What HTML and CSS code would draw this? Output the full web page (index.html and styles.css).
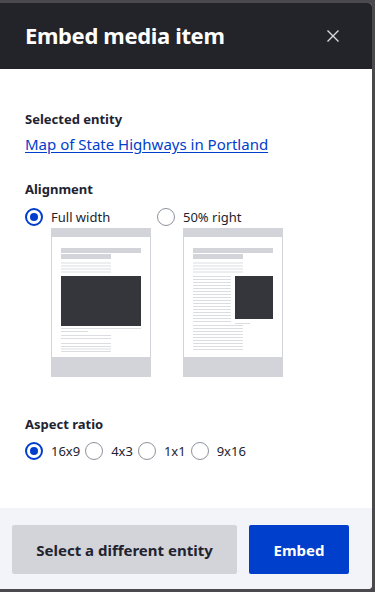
FILE: index.html
```html
<!DOCTYPE html>
<html lang="en">
<head>
<meta charset="utf-8">
<title>Embed media item</title>
<link rel="stylesheet" href="styles.css">
</head>
<body>
<div class="dialog">
  <div class="header">
    <h1 class="title">Embed media item</h1>
    <button class="close" aria-label="Close">
      <svg width="12" height="12" viewBox="0 0 12 12"><path d="M0.5 0.5 L11.5 11.5 M11.5 0.5 L0.5 11.5" stroke="#d9dade" stroke-width="1.4" fill="none"/></svg>
    </button>
  </div>
  <div class="content">
    <div class="label">Selected entity</div>
    <a class="entity-link" href="#">Map of State Highways in Portland</a>

    <div class="label label-gap">Alignment</div>
    <div class="align-options">
      <div class="align-option">
        <div class="radio-row"><span class="radio checked"></span><span class="radio-text">Full width</span></div>
        <svg class="thumb" width="100" height="149" viewBox="0 0 100 149">
          <rect x="0" y="0" width="100" height="149" fill="#d3d4d9"/>
          <rect x="1" y="9" width="98" height="120" fill="#fff"/>
          <rect x="10" y="20" width="80" height="5" fill="#d3d4d9"/>
          <rect x="10" y="26" width="50" height="5" fill="#d3d4d9"/>
          <rect x="10" y="34.5" width="50" height="1" fill="#dcdde1"/>
          <rect x="10" y="37.5" width="50" height="1" fill="#dcdde1"/>
          <rect x="10" y="40.5" width="50" height="1" fill="#dcdde1"/>
          <rect x="10" y="43.5" width="50" height="1" fill="#dcdde1"/>
          <rect x="10" y="48" width="80" height="50" fill="#35363c"/>
          <rect x="10" y="100" width="80" height="1" fill="#dcdde1"/>
          <rect x="10" y="103" width="27" height="1" fill="#dcdde1"/>
          <rect x="10" y="107" width="50" height="1" fill="#dcdde1"/>
          <rect x="10" y="110" width="50" height="1" fill="#dcdde1"/>
          <rect x="10" y="115" width="50" height="1" fill="#dcdde1"/>
          <rect x="10" y="118" width="50" height="1" fill="#dcdde1"/>
          <rect x="10" y="120.5" width="50" height="1" fill="#dcdde1"/>
          <rect x="10" y="123" width="50" height="1" fill="#dcdde1"/>
        </svg>
      </div>
      <div class="align-option">
        <div class="radio-row"><span class="radio"></span><span class="radio-text">50% right</span></div>
        <svg class="thumb" width="100" height="149" viewBox="0 0 100 149">
          <rect x="0" y="0" width="100" height="149" fill="#d3d4d9"/>
          <rect x="1" y="9" width="98" height="120" fill="#fff"/>
          <rect x="10" y="20" width="80" height="5" fill="#d3d4d9"/>
          <rect x="10" y="26" width="50" height="5" fill="#d3d4d9"/>
          <rect x="10" y="34.5" width="50" height="1" fill="#dcdde1"/>
          <rect x="10" y="37.5" width="50" height="1" fill="#dcdde1"/>
          <rect x="10" y="40.5" width="50" height="1" fill="#dcdde1"/>
          <rect x="10" y="43.5" width="50" height="1" fill="#dcdde1"/>
          <rect x="10" y="48" width="38" height="1" fill="#dcdde1"/>
          <rect x="10" y="51" width="38" height="1" fill="#dcdde1"/>
          <rect x="10" y="54" width="38" height="1" fill="#dcdde1"/>
          <rect x="10" y="57" width="38" height="1" fill="#dcdde1"/>
          <rect x="10" y="60" width="38" height="1" fill="#dcdde1"/>
          <rect x="10" y="63" width="38" height="1" fill="#dcdde1"/>
          <rect x="10" y="66" width="38" height="1" fill="#dcdde1"/>
          <rect x="10" y="69" width="38" height="1" fill="#dcdde1"/>
          <rect x="10" y="72" width="38" height="1" fill="#dcdde1"/>
          <rect x="10" y="75" width="38" height="1" fill="#dcdde1"/>
          <rect x="10" y="78" width="38" height="1" fill="#dcdde1"/>
          <rect x="10" y="81" width="38" height="1" fill="#dcdde1"/>
          <rect x="10" y="84" width="38" height="1" fill="#dcdde1"/>
          <rect x="10" y="87" width="38" height="1" fill="#dcdde1"/>
          <rect x="10" y="90" width="38" height="1" fill="#dcdde1"/>
          <rect x="52" y="48" width="38" height="43" fill="#35363c"/>
          <rect x="52" y="95" width="15" height="1" fill="#dcdde1"/>
          <rect x="10" y="93" width="38" height="1" fill="#dcdde1"/>
          <rect x="10" y="97" width="50" height="1" fill="#dcdde1"/>
          <rect x="10" y="100" width="50" height="1" fill="#dcdde1"/>
          <rect x="10" y="103" width="50" height="1" fill="#dcdde1"/>
          <rect x="10" y="106" width="50" height="1" fill="#dcdde1"/>
          <rect x="10" y="109" width="50" height="1" fill="#dcdde1"/>
          <rect x="10" y="112" width="50" height="1" fill="#dcdde1"/>
          <rect x="10" y="115" width="50" height="1" fill="#dcdde1"/>
          <rect x="10" y="118" width="50" height="1" fill="#dcdde1"/>
          <rect x="10" y="121" width="50" height="1" fill="#dcdde1"/>
        </svg>
      </div>
    </div>

    <div class="label label-gap2">Aspect ratio</div>
    <div class="ratio-options">
      <div class="radio-row"><span class="radio checked"></span><span class="radio-text">16x9</span></div>
      <div class="radio-row"><span class="radio"></span><span class="radio-text">4x3</span></div>
      <div class="radio-row"><span class="radio"></span><span class="radio-text">1x1</span></div>
      <div class="radio-row"><span class="radio"></span><span class="radio-text">9x16</span></div>
    </div>
  </div>
  <div class="footer">
    <button class="btn btn-secondary">Select a different entity</button>
    <button class="btn btn-primary">Embed</button>
  </div>
</div>
</body>
</html>
```
FILE: styles.css
```css
* { box-sizing: border-box; }
html, body { margin: 0; padding: 0; }
body {
  background: #4a4a4c;
  font-family: "Noto Sans", "Open Sans", sans-serif;
  color: #222330;
  width: 375px;
  height: 592px;
  overflow: hidden;
}
.dialog {
  margin-top: 3px;
  width: 372px;
  height: 586px;
  background: #fff;
  border-radius: 0 4px 4px 0;
  overflow: hidden;
  display: flex;
  flex-direction: column;
}
.header {
  height: 66px;
  background: #232429;
  display: flex;
  align-items: center;
  justify-content: space-between;
  padding: 0 33px 0 25px;
  flex-shrink: 0;
}
.title {
  margin: 0;
  margin-top: -2px;
  color: #fff;
  font-size: 22px;
  font-weight: 700;
  line-height: 28px;
  letter-spacing: -0.35px;
}
.close {
  background: none;
  border: 0;
  padding: 0;
  width: 12px;
  height: 12px;
  display: flex;
}
.content {
  flex: 1;
  padding: 40px 25px 0;
}
.label {
  font-size: 13px;
  font-weight: 700;
  line-height: 20px;
}
.label-gap { margin-top: 23px; }
.label-gap2 { margin-top: 37px; }
.entity-link {
  display: block;
  margin-top: 3px;
  font-size: 15px;
  line-height: 24px;
  color: #003ecc;
  text-decoration: underline;
  text-underline-offset: 2px;
}
.align-options {
  display: flex;
  gap: 6px;
  margin-top: 8px;
}
.align-option {
  display: flex;
  flex-direction: column;
  width: 126px;
}
.radio-row {
  display: flex;
  align-items: center;
  height: 20px;
}
.radio {
  width: 18px;
  height: 18px;
  border-radius: 50%;
  border: 1px solid #8e929c;
  background: #fff;
  flex-shrink: 0;
  position: relative;
}
.radio.checked {
  border: 2px solid #003ecc;
}
.radio.checked::after {
  content: "";
  position: absolute;
  left: 3px;
  top: 3px;
  width: 8px;
  height: 8px;
  border-radius: 50%;
  background: #003ecc;
}
.radio-text {
  margin-left: 8px;
  font-size: 13px;
  line-height: 20px;
  color: #222330;
}
.thumb {
  display: block;
  margin: 1px 0 0 26px;
}
.ratio-options {
  display: flex;
  margin-top: 7px;
  gap: 5px;
}
.footer {
  height: 81px;
  flex-shrink: 0;
  background: #f3f4f9;
  display: flex;
  gap: 12px;
  padding: 17px 12px 15px;
}
.btn {
  border: 0;
  border-radius: 2px;
  height: 49px;
  font-family: "Noto Sans", "Open Sans", sans-serif;
  font-size: 15px;
  font-weight: 700;
  padding: 0;
}
.btn-secondary {
  width: 225px;
  background: #d3d4d9;
  color: #222330;
}
.btn-primary {
  width: 100px;
  background: #003ecc;
  color: #fff;
}
```
